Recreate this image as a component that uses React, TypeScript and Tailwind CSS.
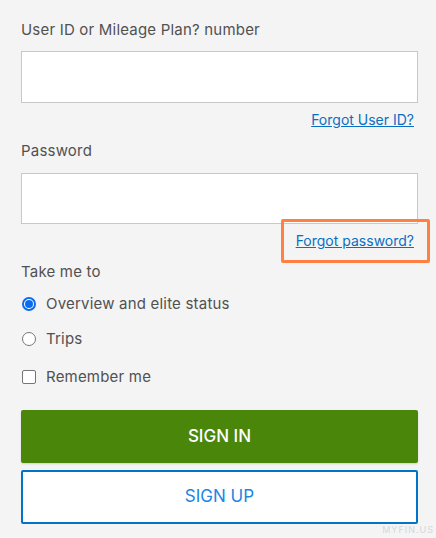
export default function App() {
  return (
    <div className="relative min-h-[538px] w-[436px] overflow-hidden bg-[#f4f4f4] font-['Inter','Roboto',sans-serif] text-[#515151]">
      <div className="ml-[21px] w-[397px] pt-[20px]">
        {/* User ID */}
        <label className="block text-[15px] leading-[20px] tracking-[0.2px]">User ID or Mileage Plan? number</label>
        <input className="mt-[11px] block h-[52px] w-full border border-[#c8c8c8] bg-white outline-none" />
        <div className="mt-[7px] flex justify-end pr-[4px] text-[14px] leading-[20px]">
          <a href="#" className="block text-[#0a6fc2] underline">Forgot User ID?</a>
        </div>

        {/* Password */}
        <label className="mt-[11px] block text-[15px] leading-[20px] tracking-[0.2px]">Password</label>
        <input type="password" className="mt-[12px] block h-[51px] w-full border border-[#c8c8c8] bg-white outline-none" />
        <div className="mt-[7px] flex justify-end pr-[4px] text-[14px] leading-[20px]">
          <div className="relative">
            <a href="#" className="block text-[#0a6fc2] underline">Forgot password?</a>
            <span className="pointer-events-none absolute -top-[12px] -right-[16px] -bottom-[12px] -left-[15px] rounded-[2px] border-[3px] border-[#ff8040]" />
          </div>
        </div>

        {/* Take me to */}
        <div className="mt-[11px] text-[15px] leading-[20px] tracking-[0.2px]">Take me to</div>
        <div className="mt-[12px] flex items-center gap-[10px] text-[15px] leading-[20px] tracking-[0.2px]">
          <span className="ml-[1px] flex h-[14px] w-[14px] items-center justify-center rounded-full border-2 border-[#0b6cf0] bg-white">
            <span className="h-[8px] w-[8px] rounded-full bg-[#0b6cf0]" />
          </span>
          <span>Overview and elite status</span>
        </div>
        <div className="mt-[15px] flex items-center gap-[10px] text-[15px] leading-[20px] tracking-[0.2px]">
          <span className="ml-[1px] h-[14px] w-[14px] rounded-full border border-[#767676] bg-white" />
          <span>Trips</span>
        </div>
        <div className="mt-[18px] flex items-center gap-[10px] text-[15px] leading-[20px] tracking-[0.2px]">
          <span className="ml-[1px] h-[14px] w-[14px] rounded-[2px] border border-[#767676] bg-white" />
          <span>Remember me</span>
        </div>

        {/* Buttons */}
        <button className="mt-[23px] flex h-[53px] w-full items-center justify-center rounded-[2px] bg-[#4a860a] text-[17px] font-medium text-white shadow-[0_1px_2px_rgba(0,0,0,0.15)]">
          SIGN IN
        </button>
        <button className="mt-[7px] flex h-[54px] w-full items-center justify-center rounded-[2px] border-2 border-[#0074c8] bg-white text-[17px] text-[#2185e3]">
          SIGN UP
        </button>
      </div>

      {/* watermark */}
      <div className="pointer-events-none absolute bottom-[2px] right-[2px] text-[9px] tracking-[1px] text-[#c9ccd2] opacity-70">MYFIN.US</div>
    </div>
  );
}
